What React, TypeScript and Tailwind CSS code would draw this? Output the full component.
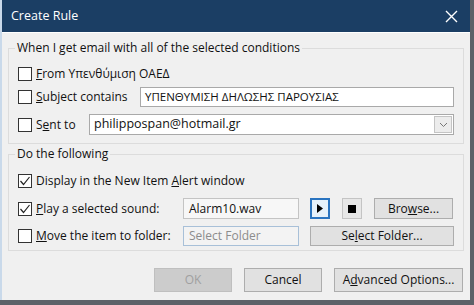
import React from "react";

const Check = ({ on }: { on?: boolean }) => (
  <span className="flex h-[14px] w-[14px] shrink-0 items-center justify-center border border-[#333] bg-white">
    {on && (
      <svg width="12" height="12" viewBox="0 0 12 12">
        <path d="M1.5 6 L4.5 9.5 L10.5 2" fill="none" stroke="#222" strokeWidth="1.2" />
      </svg>
    )}
  </span>
);

const Btn = ({ children, className = "" }: { children: React.ReactNode; className?: string }) => (
  <div
    className={
      "flex items-center justify-center border border-[#adadad] bg-[#e1e1e1] text-[#111] " + className
    }
  >
    {children}
  </div>
);

const App = () => {
  return (
    <div className="flex h-[305px] w-[474px] flex-col bg-[#5d6168] font-['Open_Sans','Noto_Sans',sans-serif] text-[12px] text-[#111]">
      <div className="flex h-[300px] w-[470px] flex-col border-l-2 border-[#c9d9ea] bg-[#f0f0f0]">
        {/* title bar */}
        <div className="flex h-[32px] shrink-0 items-center justify-between bg-[#1b3e64] pl-[9px] pr-[12px] text-[12.5px] text-white">
          <span>Create Rule</span>
          <svg width="13" height="13" viewBox="0 0 13 13">
            <path d="M1 1 L12 12 M12 1 L1 12" stroke="#fff" strokeWidth="1.4" />
          </svg>
        </div>
        <div className="h-px bg-white"></div>

        <div className="flex flex-col pt-[7px]">
          <fieldset className="mx-[6px] border border-[#dcdcdc] pb-[8px] pl-[8px] pr-[9px]">
            <legend className="-ml-[2px] px-[2px] leading-[16px]">
              When I get email with all of the selected conditions
            </legend>
            <div className="mt-[8px] flex h-[20px] items-center gap-[4px] pl-[1px]">
              <Check />
              <span>
                <u>F</u>rom Υπενθύμιση ΟΑΕΔ
              </span>
            </div>
            <div className="mt-[3px] flex h-[20px] items-center pl-[1px]">
              <div className="flex w-[122px] items-center gap-[4px]">
                <Check />
                <span>
                  <u>S</u>ubject contains
                </span>
              </div>
              <div className="flex h-[20px] flex-1 items-center border border-[#a9a9a9] bg-white px-[4px] text-[11.5px]">
                ΥΠΕΝΘΥΜΙΣΗ ΔΗΛΩΣΗΣ ΠΑΡΟΥΣΙΑΣ
              </div>
            </div>
            <div className="mt-[7px] flex h-[21px] items-center pl-[1px]">
              <div className="flex w-[71px] items-center gap-[4px]">
                <Check />
                <span>
                  S<u>e</u>nt to
                </span>
              </div>
              <div className="flex h-[21px] flex-1 items-center justify-between border border-[#a9a9a9] bg-white pl-[4px]">
                <span className="text-[12.5px]">philippospan@hotmail.gr</span>
                <div className="m-[1px] flex h-[17px] w-[18px] items-center justify-center border border-[#c4c4c4] bg-[#ececec]">
                  <svg width="9" height="6" viewBox="0 0 9 6">
                    <path d="M1 1 L4.5 4.5 L8 1" fill="none" stroke="#777" strokeWidth="1" />
                  </svg>
                </div>
              </div>
            </div>
          </fieldset>

          <fieldset className="mx-[6px] mt-[2px] border border-[#dcdcdc] pb-[4px] pl-[8px] pr-[9px]">
            <legend className="-ml-[2px] px-[2px] leading-[16px]">Do the following</legend>
            <div className="mt-[9px] flex h-[20px] items-center gap-[4px] pl-[1px]">
              <Check on />
              <span>
                Display in the New Item <u>A</u>lert window
              </span>
            </div>
            <div className="mt-[7px] flex h-[21px] items-center pl-[1px]">
              <div className="flex w-[165px] items-center gap-[4px]">
                <Check on />
                <span>
                  <u>P</u>lay a selected sound:
                </span>
              </div>
              <div className="flex h-[21px] w-[116px] items-center border border-[#c4c4c4] bg-[#f7f7f7] px-[5px]">
                Alarm10.wav
              </div>
              <div className="ml-[11px] flex h-[21px] w-[20px] items-center justify-center border-2 border-[#2a74c0] bg-[#e5f1fb]">
                <svg width="6" height="9" viewBox="0 0 6 9">
                  <path d="M0 0 L6 4.5 L0 9 Z" fill="#000" />
                </svg>
              </div>
              <div className="ml-[12px] flex h-[21px] w-[20px] items-center justify-center border border-[#c4c4c4] bg-[#e7e7e7]">
                <span className="h-[8px] w-[8px] bg-black"></span>
              </div>
              <Btn className="ml-[12px] h-[21px] w-[79px]">
                <span>
                  Bro<u>w</u>se...
                </span>
              </Btn>
            </div>
            <div className="mt-[7px] flex h-[20px] items-center pl-[1px]">
              <div className="flex w-[165px] items-center gap-[4px]">
                <Check />
                <span>
                  <u>M</u>ove the item to folder:
                </span>
              </div>
              <div className="flex h-[20px] w-[116px] items-center border border-[#a8c0d8] bg-[#f3f3f3] px-[5px] text-[#8c8c8c]">
                Select Folder
              </div>
              <Btn className="ml-[11px] h-[20px] flex-1">
                <span>
                  Se<u>l</u>ect Folder...
                </span>
              </Btn>
            </div>
          </fieldset>

          <div className="mt-[17px] flex justify-end gap-[12px] pr-[7px]">
            <div className="flex h-[24px] w-[78px] items-center justify-center border border-[#bfbfbf] bg-[#cccccc] text-[#a0a0a0]">
              OK
            </div>
            <Btn className="h-[24px] w-[78px]">Cancel</Btn>
            <Btn className="h-[24px] w-[129px]">
              <span>
                A<u>d</u>vanced Options...
              </span>
            </Btn>
          </div>
        </div>
      </div>
    </div>
  );
};

export default App;
